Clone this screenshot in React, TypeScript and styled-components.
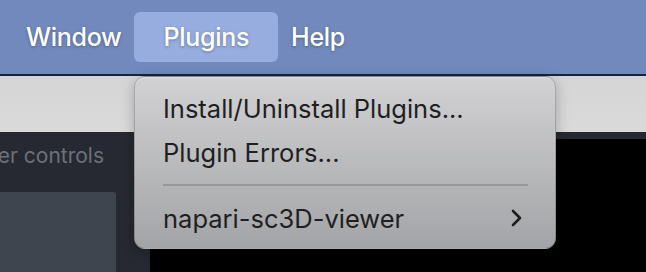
import React from "react";
import styled, { createGlobalStyle } from "styled-components";

const Global = createGlobalStyle`
  html, body { margin: 0; padding: 0; background: #000; }
  body { font-family: Inter, "Noto Sans", "Liberation Sans", sans-serif; }
`;

const Screen = styled.div`
  position: relative;
  width: 646px;
  height: 272px;
  overflow: hidden;
  display: flex;
  flex-direction: column;
  background: #000;
`;

const MenuBar = styled.div`
  height: 74px;
  flex: none;
  background: #7189bd;
  border-bottom: 2px solid #1d2330;
  display: flex;
  align-items: center;
  padding-left: 13px;
  box-sizing: content-box;
`;

const BarItem = styled.div<{ $active?: boolean }>`
  height: 50px;
  margin-top: -1px;
  padding: 0 ${(p) => (p.$active ? 29 : 13)}px;
  display: flex;
  align-items: center;
  border-radius: 6px;
  background: ${(p) => (p.$active ? "#97addf" : "transparent")};
  color: #fff;
  font-size: 25px;
  font-weight: 500;
  letter-spacing: -0.3px;
  text-shadow: 0 1px 3px rgba(20, 30, 60, 0.35);
`;

const Toolbar = styled.div`
  height: 56px;
  flex: none;
  background: linear-gradient(#d5d5d5, #dadada);
`;

const Main = styled.div`
  flex: 1;
  display: flex;
  background: #262931;
`;

const LeftPanel = styled.div`
  width: 150px;
  flex: none;
  display: flex;
  flex-direction: column;
  overflow: hidden;
`;

const PanelHeader = styled.div`
  height: 60px;
  display: flex;
  align-items: center;
  justify-content: flex-end;
  padding-right: 46px;
  padding-bottom: 14px;
  box-sizing: border-box;
  white-space: nowrap;
  color: #6c717a;
  font-size: 21px;
`;

const PanelBox = styled.div`
  width: 116px;
  flex: 1;
  background: #3f454e;
  border-top-right-radius: 3px;
`;

const Canvas = styled.div`
  flex: 1;
  margin-top: 7px;
  background: #000;
`;

const Dropdown = styled.div`
  position: absolute;
  left: 134px;
  top: 76px;
  width: 422px;
  height: 173px;
  box-sizing: border-box;
  border-radius: 11px;
  background: linear-gradient(#d2d2d4, #a3a4a7);
  border: 1px solid rgba(0, 0, 0, 0.18);
  box-shadow: inset 0 1px 0 rgba(255, 255, 255, 0.35), 0 4px 14px rgba(0, 0, 0, 0.25);
  padding: 9px 0 0;
  display: flex;
  flex-direction: column;
`;

const Item = styled.div`
  height: 44px;
  display: flex;
  align-items: center;
  justify-content: space-between;
  padding: 0 28px 0 28px;
  color: #1f1f1f;
  font-size: 25.5px;
  letter-spacing: 0px;
`;

const Separator = styled.div`
  height: 2px;
  margin: 10px 27px 10px 28px;
  background: #8d8e91;
  opacity: 0.8;
`;

const Chevron = () => (
  <svg width="14" height="18" viewBox="0 0 14 18" style={{ marginRight: 3 }}>
    <path d="M3 2 L10 9 L3 16" fill="none" stroke="#1e1e1e" strokeWidth="2.6" strokeLinecap="round" strokeLinejoin="round" />
  </svg>
);

export default function App() {
  return (
    <Screen>
      <Global />
      <MenuBar>
        <BarItem>Window</BarItem>
        <BarItem $active>Plugins</BarItem>
        <BarItem>Help</BarItem>
      </MenuBar>
      <Toolbar />
      <Main>
        <LeftPanel>
          <PanelHeader>layer controls</PanelHeader>
          <PanelBox />
        </LeftPanel>
        <Canvas />
      </Main>
      <Dropdown>
        <Item>Install/Uninstall Plugins...</Item>
        <Item>Plugin Errors...</Item>
        <Separator />
        <Item>
          napari-sc3D-viewer
          <Chevron />
        </Item>
      </Dropdown>
    </Screen>
  );
}
